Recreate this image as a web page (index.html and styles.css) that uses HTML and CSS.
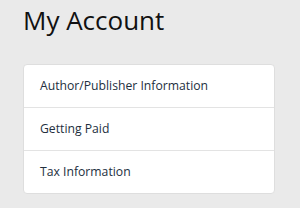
FILE: index.html
```html
<!DOCTYPE html>
<html lang="en">
<head>
    <meta charset="UTF-8">
    <title>My Account</title>
    <link rel="stylesheet" href="styles.css">
</head>
<body>
    <div class="page">
        <h1 class="title">My Account</h1>
        <div class="card">
            <a class="row" href="#">Author/Publisher Information</a>
            <a class="row" href="#">Getting Paid</a>
            <a class="row" href="#">Tax Information</a>
        </div>
    </div>
</body>
</html>
```

FILE: styles.css
```css
body {
    margin: 0;
    background: #eaeaea;
    font-family: 'Open Sans', 'Noto Sans', sans-serif;
    color: #111;
}
.page {
    padding: 0 25px 0 23px;
}
.title {
    margin: 0;
    padding-top: 2px;
    font-size: 26px;
    font-weight: normal;
    line-height: 36px;
}
.card {
    margin-top: 26px;
    background: #fff;
    border: 1px solid #dedede;
    border-radius: 4px;
}
.row {
    display: block;
    height: 42px;
    line-height: 42px;
    padding-left: 16px;
    font-size: 12.2px;
    color: #232f3e;
    text-decoration: none;
    border-top: 1px solid #e3e3e3;
}
.row:first-child {
    border-top: none;
}
```
